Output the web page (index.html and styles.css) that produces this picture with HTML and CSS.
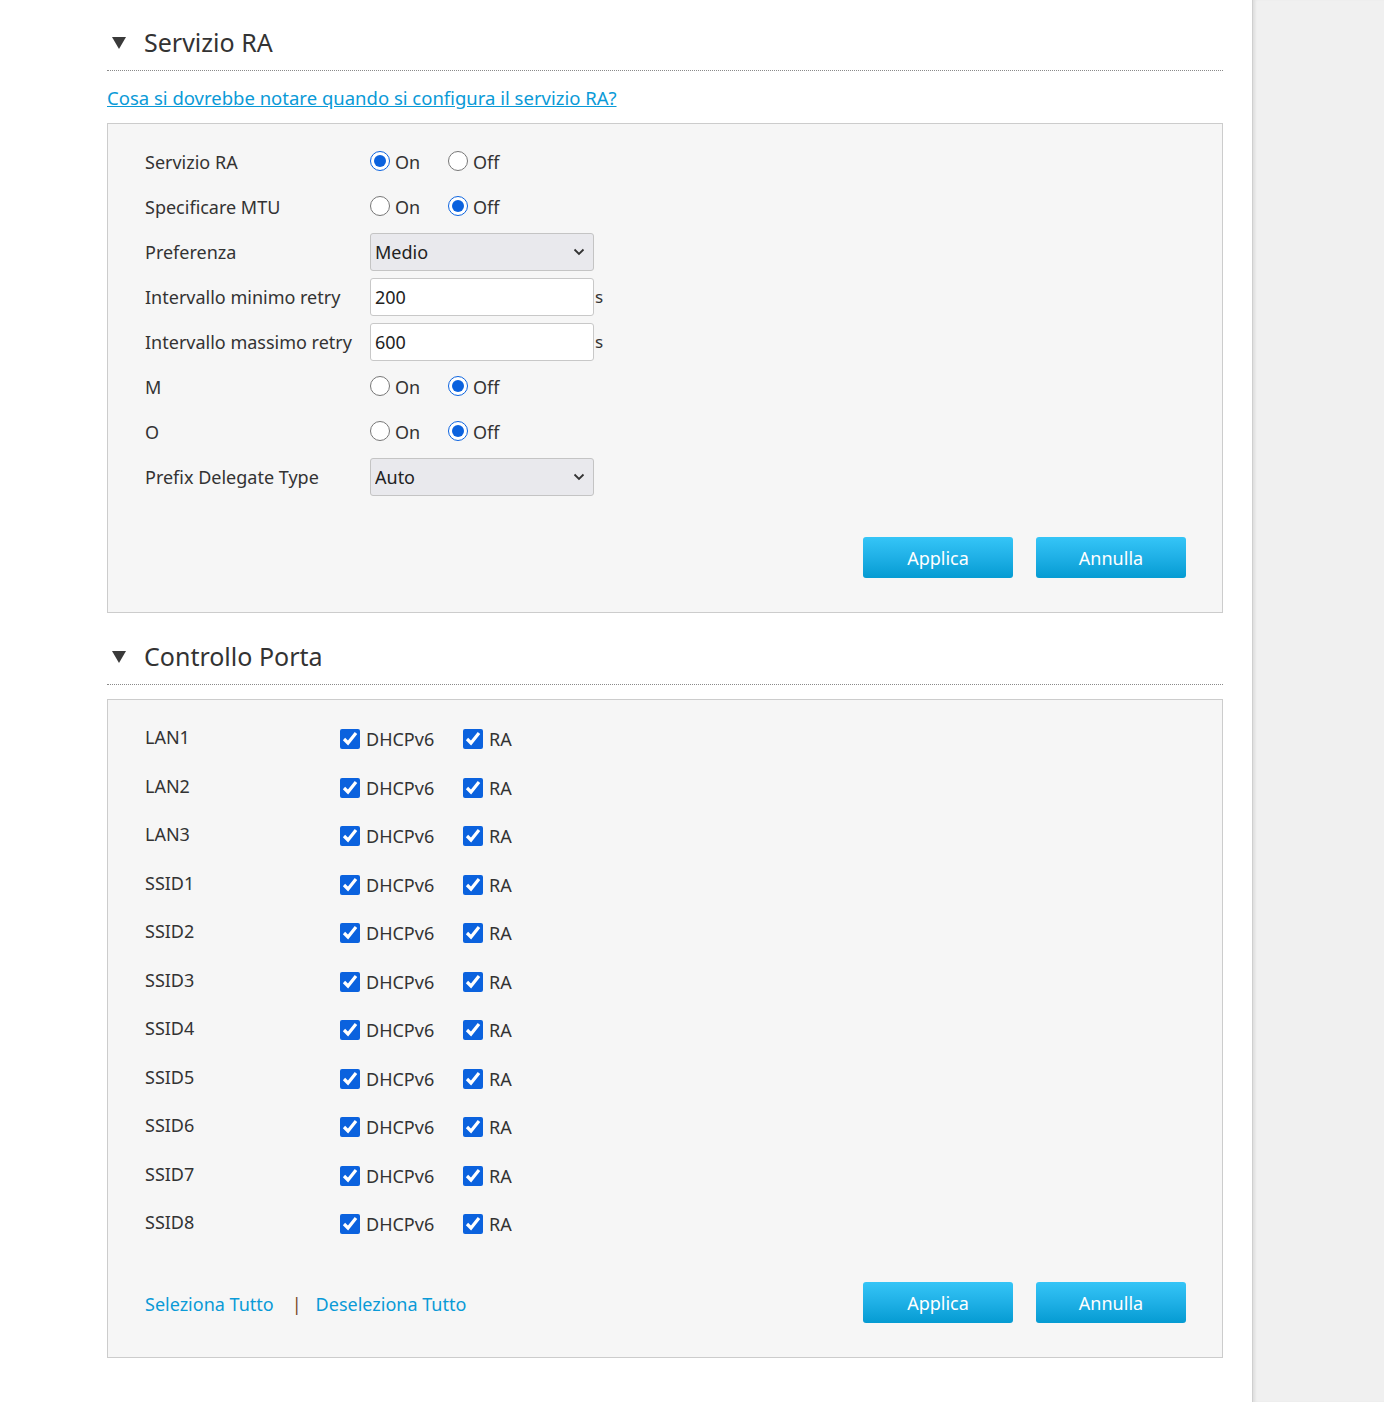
FILE: index.html
```html
<!DOCTYPE html>
<html lang="it">
<head>
<meta charset="utf-8">
<title>Servizio RA</title>
<link rel="stylesheet" href="styles.css">
</head>
<body>
<div class="main">
  <section class="section">
    <div class="sec-head">
      <svg class="tri" width="14" height="12" viewBox="0 0 14 12"><path d="M0 0H14L7 12Z" fill="#3a3a3a"/></svg>
      <h2 class="sec-title">Servizio RA</h2>
    </div>
    <a class="help-link" href="#">Cosa si dovrebbe notare quando si configura il servizio RA?</a>
    <div class="box box-ra">
      <div class="row">
        <div class="lbl">Servizio RA</div>
        <div class="ctl">
          <label class="opt"><input type="radio" name="ra" checked><span>On</span></label>
          <label class="opt"><input type="radio" name="ra"><span>Off</span></label>
        </div>
      </div>
      <div class="row">
        <div class="lbl">Specificare MTU</div>
        <div class="ctl">
          <label class="opt"><input type="radio" name="mtu"><span>On</span></label>
          <label class="opt"><input type="radio" name="mtu" checked><span>Off</span></label>
        </div>
      </div>
      <div class="row">
        <div class="lbl">Preferenza</div>
        <div class="ctl">
          <select class="sel"><option>Medio</option></select>
        </div>
      </div>
      <div class="row">
        <div class="lbl">Intervallo minimo retry</div>
        <div class="ctl">
          <input class="txt" type="text" value="200"><span class="unit">s</span>
        </div>
      </div>
      <div class="row">
        <div class="lbl">Intervallo massimo retry</div>
        <div class="ctl">
          <input class="txt" type="text" value="600"><span class="unit">s</span>
        </div>
      </div>
      <div class="row">
        <div class="lbl">M</div>
        <div class="ctl">
          <label class="opt"><input type="radio" name="m"><span>On</span></label>
          <label class="opt"><input type="radio" name="m" checked><span>Off</span></label>
        </div>
      </div>
      <div class="row">
        <div class="lbl">O</div>
        <div class="ctl">
          <label class="opt"><input type="radio" name="o"><span>On</span></label>
          <label class="opt"><input type="radio" name="o" checked><span>Off</span></label>
        </div>
      </div>
      <div class="row">
        <div class="lbl">Prefix Delegate Type</div>
        <div class="ctl">
          <select class="sel"><option>Auto</option></select>
        </div>
      </div>
      <div class="actions">
        <button class="btn">Applica</button>
        <button class="btn">Annulla</button>
      </div>
    </div>
  </section>

  <section class="section">
    <div class="sec-head sec-head-2">
      <svg class="tri" width="14" height="12" viewBox="0 0 14 12"><path d="M0 0H14L7 12Z" fill="#3a3a3a"/></svg>
      <h2 class="sec-title">Controllo Porta</h2>
    </div>
    <div class="box box-port">
      <div class="prow"><div class="plbl">LAN1</div><label class="chk"><input type="checkbox" checked><span>DHCPv6</span></label><label class="chk"><input type="checkbox" checked><span>RA</span></label></div>
      <div class="prow"><div class="plbl">LAN2</div><label class="chk"><input type="checkbox" checked><span>DHCPv6</span></label><label class="chk"><input type="checkbox" checked><span>RA</span></label></div>
      <div class="prow"><div class="plbl">LAN3</div><label class="chk"><input type="checkbox" checked><span>DHCPv6</span></label><label class="chk"><input type="checkbox" checked><span>RA</span></label></div>
      <div class="prow"><div class="plbl">SSID1</div><label class="chk"><input type="checkbox" checked><span>DHCPv6</span></label><label class="chk"><input type="checkbox" checked><span>RA</span></label></div>
      <div class="prow"><div class="plbl">SSID2</div><label class="chk"><input type="checkbox" checked><span>DHCPv6</span></label><label class="chk"><input type="checkbox" checked><span>RA</span></label></div>
      <div class="prow"><div class="plbl">SSID3</div><label class="chk"><input type="checkbox" checked><span>DHCPv6</span></label><label class="chk"><input type="checkbox" checked><span>RA</span></label></div>
      <div class="prow"><div class="plbl">SSID4</div><label class="chk"><input type="checkbox" checked><span>DHCPv6</span></label><label class="chk"><input type="checkbox" checked><span>RA</span></label></div>
      <div class="prow"><div class="plbl">SSID5</div><label class="chk"><input type="checkbox" checked><span>DHCPv6</span></label><label class="chk"><input type="checkbox" checked><span>RA</span></label></div>
      <div class="prow"><div class="plbl">SSID6</div><label class="chk"><input type="checkbox" checked><span>DHCPv6</span></label><label class="chk"><input type="checkbox" checked><span>RA</span></label></div>
      <div class="prow"><div class="plbl">SSID7</div><label class="chk"><input type="checkbox" checked><span>DHCPv6</span></label><label class="chk"><input type="checkbox" checked><span>RA</span></label></div>
      <div class="prow"><div class="plbl">SSID8</div><label class="chk"><input type="checkbox" checked><span>DHCPv6</span></label><label class="chk"><input type="checkbox" checked><span>RA</span></label></div>
      <div class="actions actions-port">
        <div class="sel-links">
          <a href="#" class="lnk">Seleziona Tutto</a>
          <span class="sep">|</span>
          <a href="#" class="lnk">Deseleziona Tutto</a>
        </div>
        <div class="btns">
          <button class="btn">Applica</button>
          <button class="btn">Annulla</button>
        </div>
      </div>
    </div>
  </section>
</div>
<div class="side"></div>
</body>
</html>
```

FILE: styles.css
```css
* { box-sizing: border-box; }

html, body {
  margin: 0;
  height: 100%;
}

body {
  display: flex;
  min-height: 1402px;
  font-family: "Noto Sans", "Open Sans", "Liberation Sans", sans-serif;
  color: #333;
  background: #fff;
}

.main {
  width: 1252px;
  flex: none;
  padding: 0 29px 0 107px;
  background: #fff;
}

.side {
  flex: 1;
  background: #f0f0f0;
  border-left: 1px solid #cfcfcf;
  box-shadow: inset 3px 0 3px -1px rgba(0,0,0,0.08);
}

.sec-head {
  display: flex;
  align-items: center;
  padding: 22px 0 8px 5px;
  border-bottom: 1px dotted #8a8a8a;
}

.sec-head-2 {
  padding-top: 23px;
}

.tri {
  flex: none;
  margin-top: 2px;
}

.sec-title {
  margin: 0 0 0 18px;
  font-size: 25px;
  font-weight: normal;
  line-height: 40px;
  color: #333;
}

.help-link {
  display: block;
  margin-top: 14px;
  font-size: 18.5px;
  line-height: 26px;
  color: #0a9ad7;
  text-decoration: underline;
  width: max-content;
}

.box {
  background: #f6f6f6;
  border: 1px solid #cccccc;
}

.box-ra {
  margin-top: 12px;
  padding: 15px 36px 34px 37px;
}

.row {
  display: flex;
  align-items: center;
  height: 45px;
  font-size: 18px;
}

.lbl {
  width: 225px;
  flex: none;
  color: #333;
}

.ctl {
  display: flex;
  align-items: center;
}

.opt {
  display: flex;
  align-items: center;
  width: 78px;
}

.opt input {
  width: 20px;
  height: 20px;
  margin: 0 5px 2px 0;
  accent-color: #0b62de;
}

.opt span {
  color: #333;
}

.sel {
  appearance: none;
  -webkit-appearance: none;
  width: 224px;
  height: 38px;
  padding: 0 4px;
  font: inherit;
  font-size: 18px;
  color: #222;
  border: 1px solid #c4c4c4;
  border-radius: 3px;
  background-color: #e9e9ed;
  background-image: url("data:image/svg+xml;utf8,<svg xmlns='http://www.w3.org/2000/svg' width='12' height='8' viewBox='0 0 12 8'><path d='M1.5 1.5L6 6L10.5 1.5' fill='none' stroke='%23333' stroke-width='1.8'/></svg>");
  background-repeat: no-repeat;
  background-position: right 8px center;
}

.txt {
  width: 224px;
  height: 38px;
  padding: 0 4px;
  font: inherit;
  font-size: 18px;
  color: #222;
  border: 1px solid #c8c8c8;
  border-radius: 3px;
  background: #fff;
  outline: none;
}

.unit {
  margin-left: 1px;
  font-size: 17px;
  color: #333;
}

.actions {
  display: flex;
  justify-content: flex-end;
  gap: 23px;
  margin-top: 38px;
}

.btn {
  width: 150px;
  height: 41px;
  border: 0;
  border-radius: 3px;
  background: linear-gradient(to bottom, #35c5f7 0%, #1fb0e6 50%, #059bd2 100%);
  color: #fff;
  font: inherit;
  font-size: 18px;
  cursor: pointer;
}

.box-port {
  margin-top: 14px;
  padding: 15px 36px 34px 37px;
}

.prow {
  display: flex;
  align-items: center;
  height: 48.5px;
  font-size: 18px;
}

.plbl {
  width: 195px;
  flex: none;
  padding-bottom: 4px;
  color: #333;
}

.chk {
  display: flex;
  align-items: center;
  width: 123px;
}

.chk input {
  width: 20px;
  height: 20px;
  margin: 0 6px 0 0;
  accent-color: #0b62de;
}

.actions-port {
  justify-content: space-between;
  align-items: center;
  margin-top: 33.5px;
}

.sel-links {
  display: flex;
  align-items: center;
  font-size: 18px;
  padding-top: 3px;
}

.lnk {
  color: #0a9ad7;
  text-decoration: none;
}

.sep {
  margin: 0 14px 0 18px;
  color: #7a4a2a;
}

.btns {
  display: flex;
  gap: 23px;
}
```
